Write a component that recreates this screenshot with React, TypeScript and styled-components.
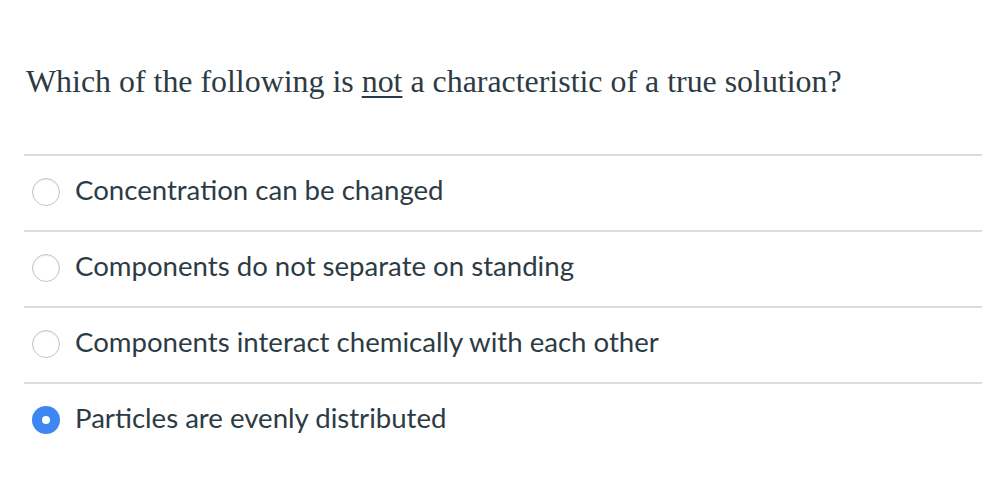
import React from "react";
import styled, { createGlobalStyle } from "styled-components";

const Global = createGlobalStyle`
  html, body { margin: 0; padding: 0; background: #fff; }
  body { width: 982px; height: 484px; overflow: hidden; }
`;

const Page = styled.div`
  padding: 0 0 0 24px;
  color: #2d3b45;
`;

const Question = styled.p`
  margin: 0;
  padding: 60px 0 0 2px;
  height: 154px;
  box-sizing: border-box;
  font-family: "Liberation Serif", "Times New Roman", serif;
  font-size: 31.9px;
  line-height: 44px;
  color: #2d3b45;
  u { text-decoration-thickness: 1.5px; text-underline-offset: 4px; }
`;

const Answers = styled.ul`
  list-style: none;
  margin: 0;
  padding: 0;
`;

const Answer = styled.li`
  display: flex;
  align-items: center;
  gap: 15px;
  height: 74px;
  box-sizing: content-box;
  border-top: 2px solid #dcdcdc;
  padding: 0 0 0 8px;
`;

const Radio = styled.span<{ $checked?: boolean }>`
  width: 28px;
  height: 28px;
  margin-bottom: 3px;
  box-sizing: border-box;
  border-radius: 50%;
  flex: none;
  display: flex;
  align-items: center;
  justify-content: center;
  background: ${(p) => (p.$checked ? "#3e86f2" : "#fff")};
  border: ${(p) => (p.$checked ? "none" : "1.5px solid #c4c4c4")};
  box-shadow: ${(p) => (p.$checked ? "none" : "inset 0 1px 2px rgba(0,0,0,0.08)")};
  &::after {
    content: "";
    display: ${(p) => (p.$checked ? "block" : "none")};
    width: 8px;
    height: 8px;
    border-radius: 50%;
    background: #fff;
  }
`;

const Label = styled.span`
  margin-bottom: 8px;
  font-family: Lato, "Open Sans", sans-serif;
  font-size: 27.6px;
  color: #2d3b45;
`;

const options = [
  "Concentration can be changed",
  "Components do not separate on standing",
  "Components interact chemically with each other",
  "Particles are evenly distributed",
];

export default function App() {
  return (
    <>
      <Global />
      <Page>
        <Question>
          Which of the following is <u>not</u> a characteristic of a true solution?
        </Question>
        <Answers>
          {options.map((o, i) => (
            <Answer key={o}>
              <Radio $checked={i === 3} />
              <Label>{o}</Label>
            </Answer>
          ))}
        </Answers>
      </Page>
    </>
  );
}
